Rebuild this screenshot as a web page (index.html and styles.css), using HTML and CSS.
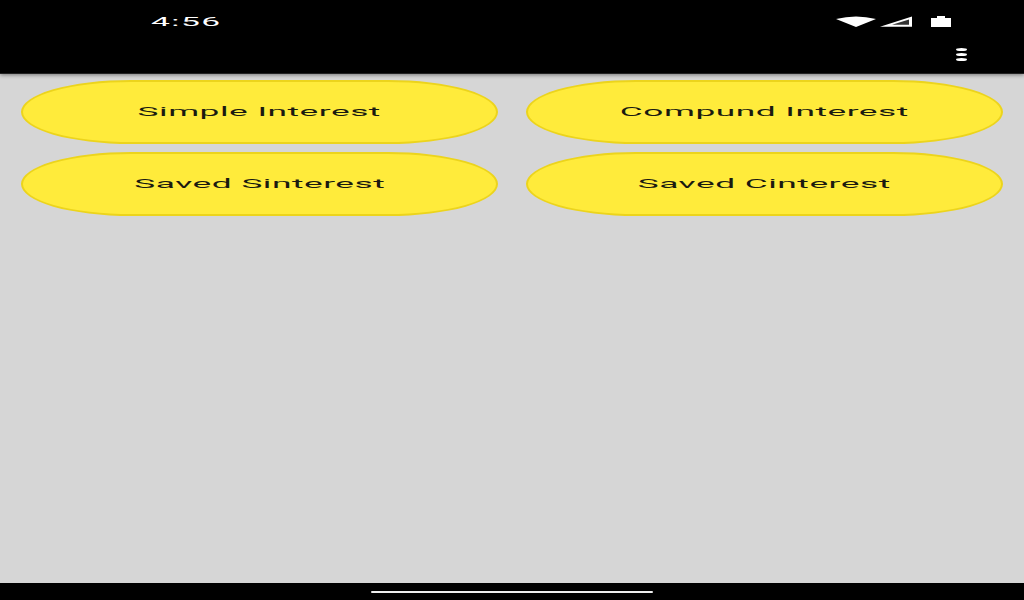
FILE: index.html
```html
<!DOCTYPE html>
<html lang="en">

<head>
    <meta charset="UTF-8">
    <title>Interest Calculator</title>
    <link rel="stylesheet" href="styles.css">
</head>

<body>
    <!-- Status bar and action bar -->
    <header class="topbar">
        <div class="status">
            <span class="clock">4:56</span>
            <div class="status-icons">
                <svg class="wifi" width="40" height="11" viewBox="0 0 40 11">
                    <path d="M0 3 Q20 -2 40 3 L20 11 Z" fill="#fff" />
                </svg>
                <svg class="signal" width="32" height="11" viewBox="0 0 32 11">
                    <path d="M0 10.8 L32 0.5 V10.8 Z" fill="#fff" />
                    <path d="M12 8.8 L29 3.6 V8.8 Z" fill="#333" />
                </svg>
                <svg class="battery" width="20" height="12" viewBox="0 0 20 12">
                    <path d="M0 3 H6 V1 H14 V3 H20 V12 H0 Z" fill="#fff" />
                </svg>
            </div>
        </div>
        <div class="actions">
            <div class="overflow">
                <span></span>
                <span></span>
                <span></span>
            </div>
        </div>
    </header>

    <!-- Buttons -->
    <main class="content">
        <div class="button"><span>Simple Interest</span></div>
        <div class="button"><span>Compund Interest</span></div>
        <div class="button"><span>Saved Sinterest</span></div>
        <div class="button"><span>Saved Cinterest</span></div>
    </main>

    <footer class="navbar">
        <div class="home"></div>
    </footer>
</body>

</html>
```

FILE: styles.css
```css
/* General styles */
body {
    margin: 0;
    height: 100vh;
    overflow: hidden;
    display: flex;
    flex-direction: column;
    font-family: Roboto, "Liberation Sans", sans-serif;
    background-color: #d6d6d6;
}

/* Top bar */
.topbar {
    height: 74px;
    flex-shrink: 0;
    box-sizing: border-box;
    background: #000;
    border-bottom: 1px solid #222;
    box-shadow: 0 1px 4px rgba(0, 0, 0, 0.45);
    padding: 15px 57px 0 151px;
    position: relative;
}

.status {
    height: 12px;
    display: flex;
    align-items: center;
    justify-content: space-between;
    padding-right: 16px;
}

.clock {
    color: #fff;
    font-size: 14px;
    line-height: 12px;
    letter-spacing: 0.6px;
    transform: scale(2.4, 0.9);
    transform-origin: left center;
}

.status-icons {
    display: flex;
    align-items: center;
    gap: 4px;
}

.status-icons svg {
    display: block;
}

.battery {
    margin-left: 15px;
}

.actions {
    display: flex;
    justify-content: flex-end;
    margin-top: 21px;
}

.overflow {
    display: flex;
    flex-direction: column;
    gap: 2px;
}

.overflow span {
    display: block;
    width: 11px;
    height: 3px;
    border-radius: 50%;
    background: #fff;
}

/* Buttons */
.content {
    flex: 1;
    display: grid;
    grid-template-columns: 477px 477px;
    grid-auto-rows: 64px;
    column-gap: 28px;
    row-gap: 8px;
    padding: 6px 21px 0;
    align-content: start;
}

.button {
    box-sizing: border-box;
    background: #ffeb3b;
    border: 2px solid #ecd41c;
    border-radius: 110px / 32px;
    display: flex;
    align-items: center;
    justify-content: center;
    color: #1a1a10;
    font-size: 14px;
}

.button span {
    display: inline-block;
    letter-spacing: 0.2px;
    transform: scale(2.52, 0.85);
    white-space: nowrap;
}

/* Navigation bar */
.navbar {
    height: 17px;
    flex-shrink: 0;
    background: #000;
    display: flex;
    justify-content: center;
    align-items: center;
}

.home {
    width: 282px;
    height: 2px;
    margin-top: 1px;
    background: #eee;
    border-radius: 1px;
}
```
